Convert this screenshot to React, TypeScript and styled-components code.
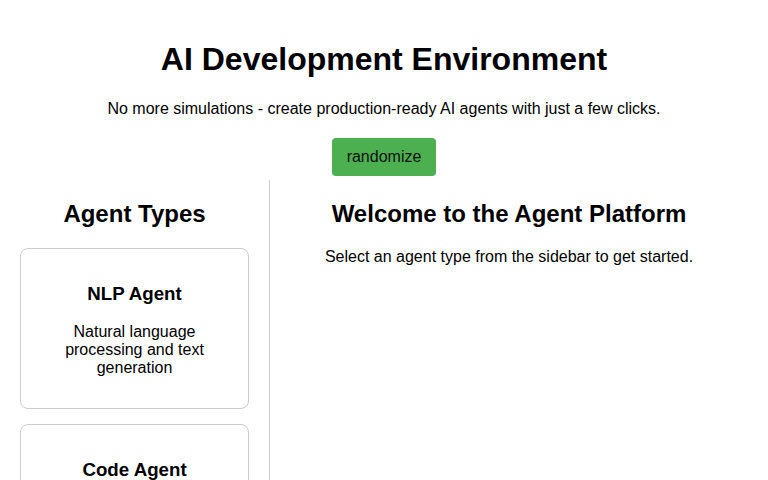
import { createGlobalStyle } from "styled-components";
import styled from "styled-components";

const GlobalStyle = createGlobalStyle`
  html, body {
    margin: 0;
    padding: 0;
    background: #ffffff;
  }
  body {
    font-family: "Liberation Sans", Arial, sans-serif;
    color: #000;
  }
`;

const Page = styled.div`
  padding: 20px 20px 0 20px;
`;

const Header = styled.header`
  text-align: center;
`;

const Title = styled.h1`
  font-size: 32px;
  margin: 21.44px 0;
`;

const Subtitle = styled.p`
  font-size: 16px;
  margin: 16px 0 20px;
`;

const RandomButton = styled.button`
  background-color: #4caf50;
  color: #111;
  border: none;
  border-radius: 4px;
  padding: 10px 15px;
  font-family: "Liberation Sans", Arial, sans-serif;
  font-size: 16px;
  line-height: 18px;
  cursor: pointer;
  margin-bottom: 4px;
`;

const Layout = styled.div`
  display: flex;
  min-height: 320px;
`;

const Sidebar = styled.aside`
  width: 250px;
  box-sizing: border-box;
  padding: 20px 20px 20px 0;
  border-right: 1px solid #ccc;
  flex-shrink: 0;
`;

const SectionTitle = styled.h2`
  font-size: 24px;
  text-align: center;
  margin: 0 0 19.92px;
`;

const AgentCard = styled.div`
  border: 1px solid #ccc;
  border-radius: 8px;
  padding: 15px;
  margin-bottom: 15px;
  text-align: center;
  cursor: pointer;
`;

const CardTitle = styled.h3`
  font-size: 18.72px;
  margin: 18.72px 0;
`;

const CardText = styled.p`
  font-size: 16px;
  margin: 16px 0;
`;

const Main = styled.main`
  flex: 1;
  padding: 20px;
  text-align: center;
`;

const MainText = styled.p`
  font-size: 16px;
  margin: 0;
`;

const agents = [
  { id: "nlp", name: "NLP Agent", desc: "Natural language processing and text generation" },
  { id: "code", name: "Code Agent", desc: "Code generation, review and debugging" },
  { id: "vision", name: "Vision Agent", desc: "Image analysis and recognition" },
];

const App = () => {
  return (
    <>
      <GlobalStyle />
      <Page>
        <Header>
          <Title>AI Development Environment</Title>
          <Subtitle>No more simulations - create production-ready AI agents with just a few clicks.</Subtitle>
          <RandomButton>randomize</RandomButton>
        </Header>
        <Layout>
          <Sidebar>
            <SectionTitle>Agent Types</SectionTitle>
            {agents.map((a) => (
              <AgentCard key={a.id}>
                <CardTitle>{a.name}</CardTitle>
                <CardText>{a.desc}</CardText>
              </AgentCard>
            ))}
          </Sidebar>
          <Main>
            <SectionTitle>Welcome to the Agent Platform</SectionTitle>
            <MainText>Select an agent type from the sidebar to get started.</MainText>
          </Main>
        </Layout>
      </Page>
    </>
  );
};

export default App;
